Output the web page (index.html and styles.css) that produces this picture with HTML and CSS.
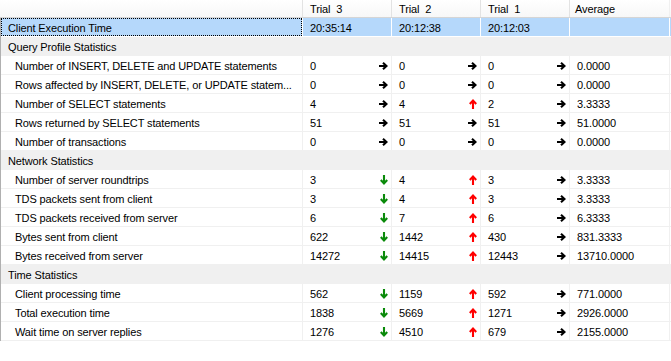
FILE: index.html
```html
<!DOCTYPE html>
<html>
<head>
<meta charset="utf-8">
<link rel="stylesheet" href="styles.css">
</head>
<body>
<div class="grid">
  <div class="hdr">
    <div class="hc"></div>
    <div class="hc">Trial&nbsp; 3</div>
    <div class="hc">Trial&nbsp; 2</div>
    <div class="hc">Trial&nbsp; 1</div>
    <div class="hc">Average</div>
  </div>
  <div class="body">
    <div class="row sel">
      <div class="c lbl top"><span class="focus">Client Execution Time</span></div>
      <div class="c v"><span>20:35:14</span></div>
      <div class="c v"><span>20:12:38</span></div>
      <div class="c v"><span>20:12:03</span></div>
      <div class="c v"></div>
    </div>
    <div class="row sec"><div class="c lbl top">Query Profile Statistics</div></div>
    <div class="row">
      <div class="c lbl">Number of INSERT, DELETE and UPDATE statements</div>
      <div class="c v"><span>0</span><svg class="ar" width="9" height="8" viewBox="0 0 9 8"><path d="M0 4H7.3M4 0.8L7.5 4L4 7.2" fill="none" stroke="#000" stroke-width="2.1"/></svg></div>
      <div class="c v"><span>0</span><svg class="ar" width="9" height="8" viewBox="0 0 9 8"><path d="M0 4H7.3M4 0.8L7.5 4L4 7.2" fill="none" stroke="#000" stroke-width="2.1"/></svg></div>
      <div class="c v"><span>0</span><svg class="ar" width="9" height="8" viewBox="0 0 9 8"><path d="M0 4H7.3M4 0.8L7.5 4L4 7.2" fill="none" stroke="#000" stroke-width="2.1"/></svg></div>
      <div class="c v"><span>0.0000</span></div>
    </div>
    <div class="row">
      <div class="c lbl">Rows affected by INSERT, DELETE, or UPDATE statem...</div>
      <div class="c v"><span>0</span><svg class="ar" width="9" height="8" viewBox="0 0 9 8"><path d="M0 4H7.3M4 0.8L7.5 4L4 7.2" fill="none" stroke="#000" stroke-width="2.1"/></svg></div>
      <div class="c v"><span>0</span><svg class="ar" width="9" height="8" viewBox="0 0 9 8"><path d="M0 4H7.3M4 0.8L7.5 4L4 7.2" fill="none" stroke="#000" stroke-width="2.1"/></svg></div>
      <div class="c v"><span>0</span><svg class="ar" width="9" height="8" viewBox="0 0 9 8"><path d="M0 4H7.3M4 0.8L7.5 4L4 7.2" fill="none" stroke="#000" stroke-width="2.1"/></svg></div>
      <div class="c v"><span>0.0000</span></div>
    </div>
    <div class="row">
      <div class="c lbl">Number of SELECT statements</div>
      <div class="c v"><span>4</span><svg class="ar" width="9" height="8" viewBox="0 0 9 8"><path d="M0 4H7.3M4 0.8L7.5 4L4 7.2" fill="none" stroke="#000" stroke-width="2.1"/></svg></div>
      <div class="c v"><span>4</span><svg class="ar up" width="8" height="10" viewBox="0 0 8 10"><path d="M4 10V1.8M0.8 5L4 1.6L7.2 5" fill="none" stroke="#f00" stroke-width="2.1"/></svg></div>
      <div class="c v"><span>2</span><svg class="ar" width="9" height="8" viewBox="0 0 9 8"><path d="M0 4H7.3M4 0.8L7.5 4L4 7.2" fill="none" stroke="#000" stroke-width="2.1"/></svg></div>
      <div class="c v"><span>3.3333</span></div>
    </div>
    <div class="row">
      <div class="c lbl">Rows returned by SELECT statements</div>
      <div class="c v"><span>51</span><svg class="ar" width="9" height="8" viewBox="0 0 9 8"><path d="M0 4H7.3M4 0.8L7.5 4L4 7.2" fill="none" stroke="#000" stroke-width="2.1"/></svg></div>
      <div class="c v"><span>51</span><svg class="ar" width="9" height="8" viewBox="0 0 9 8"><path d="M0 4H7.3M4 0.8L7.5 4L4 7.2" fill="none" stroke="#000" stroke-width="2.1"/></svg></div>
      <div class="c v"><span>51</span><svg class="ar" width="9" height="8" viewBox="0 0 9 8"><path d="M0 4H7.3M4 0.8L7.5 4L4 7.2" fill="none" stroke="#000" stroke-width="2.1"/></svg></div>
      <div class="c v"><span>51.0000</span></div>
    </div>
    <div class="row">
      <div class="c lbl">Number of transactions</div>
      <div class="c v"><span>0</span><svg class="ar" width="9" height="8" viewBox="0 0 9 8"><path d="M0 4H7.3M4 0.8L7.5 4L4 7.2" fill="none" stroke="#000" stroke-width="2.1"/></svg></div>
      <div class="c v"><span>0</span><svg class="ar" width="9" height="8" viewBox="0 0 9 8"><path d="M0 4H7.3M4 0.8L7.5 4L4 7.2" fill="none" stroke="#000" stroke-width="2.1"/></svg></div>
      <div class="c v"><span>0</span><svg class="ar" width="9" height="8" viewBox="0 0 9 8"><path d="M0 4H7.3M4 0.8L7.5 4L4 7.2" fill="none" stroke="#000" stroke-width="2.1"/></svg></div>
      <div class="c v"><span>0.0000</span></div>
    </div>
    <div class="row sec"><div class="c lbl top">Network Statistics</div></div>
    <div class="row">
      <div class="c lbl">Number of server roundtrips</div>
      <div class="c v"><span>3</span><svg class="ar dn" width="8" height="10" viewBox="0 0 8 10"><path d="M4 0V8.2M0.8 5L4 8.4L7.2 5" fill="none" stroke="#0a8a0a" stroke-width="2.1"/></svg></div>
      <div class="c v"><span>4</span><svg class="ar up" width="8" height="10" viewBox="0 0 8 10"><path d="M4 10V1.8M0.8 5L4 1.6L7.2 5" fill="none" stroke="#f00" stroke-width="2.1"/></svg></div>
      <div class="c v"><span>3</span><svg class="ar" width="9" height="8" viewBox="0 0 9 8"><path d="M0 4H7.3M4 0.8L7.5 4L4 7.2" fill="none" stroke="#000" stroke-width="2.1"/></svg></div>
      <div class="c v"><span>3.3333</span></div>
    </div>
    <div class="row">
      <div class="c lbl">TDS packets sent from client</div>
      <div class="c v"><span>3</span><svg class="ar dn" width="8" height="10" viewBox="0 0 8 10"><path d="M4 0V8.2M0.8 5L4 8.4L7.2 5" fill="none" stroke="#0a8a0a" stroke-width="2.1"/></svg></div>
      <div class="c v"><span>4</span><svg class="ar up" width="8" height="10" viewBox="0 0 8 10"><path d="M4 10V1.8M0.8 5L4 1.6L7.2 5" fill="none" stroke="#f00" stroke-width="2.1"/></svg></div>
      <div class="c v"><span>3</span><svg class="ar" width="9" height="8" viewBox="0 0 9 8"><path d="M0 4H7.3M4 0.8L7.5 4L4 7.2" fill="none" stroke="#000" stroke-width="2.1"/></svg></div>
      <div class="c v"><span>3.3333</span></div>
    </div>
    <div class="row">
      <div class="c lbl">TDS packets received from server</div>
      <div class="c v"><span>6</span><svg class="ar dn" width="8" height="10" viewBox="0 0 8 10"><path d="M4 0V8.2M0.8 5L4 8.4L7.2 5" fill="none" stroke="#0a8a0a" stroke-width="2.1"/></svg></div>
      <div class="c v"><span>7</span><svg class="ar up" width="8" height="10" viewBox="0 0 8 10"><path d="M4 10V1.8M0.8 5L4 1.6L7.2 5" fill="none" stroke="#f00" stroke-width="2.1"/></svg></div>
      <div class="c v"><span>6</span><svg class="ar" width="9" height="8" viewBox="0 0 9 8"><path d="M0 4H7.3M4 0.8L7.5 4L4 7.2" fill="none" stroke="#000" stroke-width="2.1"/></svg></div>
      <div class="c v"><span>6.3333</span></div>
    </div>
    <div class="row">
      <div class="c lbl">Bytes sent from client</div>
      <div class="c v"><span>622</span><svg class="ar dn" width="8" height="10" viewBox="0 0 8 10"><path d="M4 0V8.2M0.8 5L4 8.4L7.2 5" fill="none" stroke="#0a8a0a" stroke-width="2.1"/></svg></div>
      <div class="c v"><span>1442</span><svg class="ar up" width="8" height="10" viewBox="0 0 8 10"><path d="M4 10V1.8M0.8 5L4 1.6L7.2 5" fill="none" stroke="#f00" stroke-width="2.1"/></svg></div>
      <div class="c v"><span>430</span><svg class="ar" width="9" height="8" viewBox="0 0 9 8"><path d="M0 4H7.3M4 0.8L7.5 4L4 7.2" fill="none" stroke="#000" stroke-width="2.1"/></svg></div>
      <div class="c v"><span>831.3333</span></div>
    </div>
    <div class="row">
      <div class="c lbl">Bytes received from server</div>
      <div class="c v"><span>14272</span><svg class="ar dn" width="8" height="10" viewBox="0 0 8 10"><path d="M4 0V8.2M0.8 5L4 8.4L7.2 5" fill="none" stroke="#0a8a0a" stroke-width="2.1"/></svg></div>
      <div class="c v"><span>14415</span><svg class="ar up" width="8" height="10" viewBox="0 0 8 10"><path d="M4 10V1.8M0.8 5L4 1.6L7.2 5" fill="none" stroke="#f00" stroke-width="2.1"/></svg></div>
      <div class="c v"><span>12443</span><svg class="ar" width="9" height="8" viewBox="0 0 9 8"><path d="M0 4H7.3M4 0.8L7.5 4L4 7.2" fill="none" stroke="#000" stroke-width="2.1"/></svg></div>
      <div class="c v"><span>13710.0000</span></div>
    </div>
    <div class="row sec"><div class="c lbl top">Time Statistics</div></div>
    <div class="row">
      <div class="c lbl">Client processing time</div>
      <div class="c v"><span>562</span><svg class="ar dn" width="8" height="10" viewBox="0 0 8 10"><path d="M4 0V8.2M0.8 5L4 8.4L7.2 5" fill="none" stroke="#0a8a0a" stroke-width="2.1"/></svg></div>
      <div class="c v"><span>1159</span><svg class="ar up" width="8" height="10" viewBox="0 0 8 10"><path d="M4 10V1.8M0.8 5L4 1.6L7.2 5" fill="none" stroke="#f00" stroke-width="2.1"/></svg></div>
      <div class="c v"><span>592</span><svg class="ar" width="9" height="8" viewBox="0 0 9 8"><path d="M0 4H7.3M4 0.8L7.5 4L4 7.2" fill="none" stroke="#000" stroke-width="2.1"/></svg></div>
      <div class="c v"><span>771.0000</span></div>
    </div>
    <div class="row">
      <div class="c lbl">Total execution time</div>
      <div class="c v"><span>1838</span><svg class="ar dn" width="8" height="10" viewBox="0 0 8 10"><path d="M4 0V8.2M0.8 5L4 8.4L7.2 5" fill="none" stroke="#0a8a0a" stroke-width="2.1"/></svg></div>
      <div class="c v"><span>5669</span><svg class="ar up" width="8" height="10" viewBox="0 0 8 10"><path d="M4 10V1.8M0.8 5L4 1.6L7.2 5" fill="none" stroke="#f00" stroke-width="2.1"/></svg></div>
      <div class="c v"><span>1271</span><svg class="ar" width="9" height="8" viewBox="0 0 9 8"><path d="M0 4H7.3M4 0.8L7.5 4L4 7.2" fill="none" stroke="#000" stroke-width="2.1"/></svg></div>
      <div class="c v"><span>2926.0000</span></div>
    </div>
    <div class="row">
      <div class="c lbl">Wait time on server replies</div>
      <div class="c v"><span>1276</span><svg class="ar dn" width="8" height="10" viewBox="0 0 8 10"><path d="M4 0V8.2M0.8 5L4 8.4L7.2 5" fill="none" stroke="#0a8a0a" stroke-width="2.1"/></svg></div>
      <div class="c v"><span>4510</span><svg class="ar up" width="8" height="10" viewBox="0 0 8 10"><path d="M4 10V1.8M0.8 5L4 1.6L7.2 5" fill="none" stroke="#f00" stroke-width="2.1"/></svg></div>
      <div class="c v"><span>679</span><svg class="ar" width="9" height="8" viewBox="0 0 9 8"><path d="M0 4H7.3M4 0.8L7.5 4L4 7.2" fill="none" stroke="#000" stroke-width="2.1"/></svg></div>
      <div class="c v"><span>2155.0000</span></div>
    </div>
  </div>
</div>
</body>
</html>
```

FILE: styles.css
```css
* { box-sizing: border-box; }
html, body { margin: 0; padding: 0; background: #fff; }
body {
  font-family: "Liberation Sans", Arial, sans-serif;
  font-size: 11px;
  letter-spacing: -0.12px;
  color: #000;
}
.grid { width: 671px; }
.hdr {
  display: grid;
  grid-template-columns: 303px 89px 89px 89px 100px;
  height: 18px;
  background: linear-gradient(#ffffff, #f7f7f7);
  border-bottom: 1px solid #d5d5d5;
}
.hc {
  border-right: 1px solid #e3e3e3;
  padding: 1px 0 0 7px;
  line-height: 16px;
  white-space: nowrap;
}
.hc:last-child { padding-left: 5px; border-right: 1px solid #f0f0f0; }
.body { border-left: 1px solid #b0b0b0; }
.row {
  display: grid;
  grid-template-columns: 302px 89px 89px 89px 100px;
  height: 19px;
  border-bottom: 1px solid #f0f0f0;
}
.c {
  border-right: 1px solid #f0f0f0;
  padding-top: 2px;
  line-height: 16px;
  white-space: nowrap;
  overflow: hidden;
}
.lbl { padding-left: 14px; }
.lbl.top { padding-left: 7px; }
.v {
  display: flex;
  justify-content: space-between;
  align-items: center;
  padding: 0 3px 0 7px;
}
.v span { padding-top: 2px; line-height: 16px; }
.ar { display: block; margin-top: 1px; }
.sec { grid-template-columns: 1fr; background: #f0f0f0; border-bottom-color: #f0f0f0; }
.sec .c { border-right: none; }
.sel { background: #b5d8fb; border-bottom-color: #fff; }
.sel .c { border-right-color: #fff; }
.sel .lbl.top { padding: 0; }
.focus {
  display: block;
  height: 18px;
  border: 1px dotted #000;
  padding: 1px 0 0 6px;
  line-height: 16px;
}
```
